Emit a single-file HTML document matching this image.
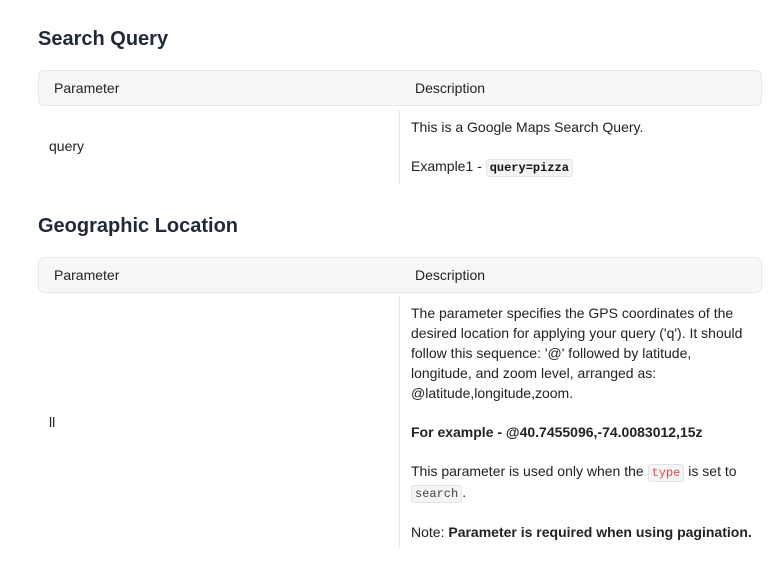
<!DOCTYPE html>
<html><head><style>
body{margin:0;background:#fff;font-family:"Liberation Sans",sans-serif;color:#1f2328;width:768px;height:566px;overflow:hidden;position:relative}
h2{position:absolute;left:38px;margin:0;font-size:20px;font-weight:bold;color:#1f2937}
.hd{position:absolute;left:38px;width:722px;height:34px;background:#f6f7f9;border:1px solid #e5e7eb;border-radius:7px;font-size:14px;color:#222}
.hd span{position:absolute;top:9px}
.t{position:absolute;font-size:14px;line-height:20px;color:#222}
.div{position:absolute;left:399px;width:1px;background:#e5e7eb}
code{font-family:"Liberation Mono",monospace;font-size:12px;line-height:14px;background:#f3f4f6;border:1px solid #e2e4e8;border-radius:3px;padding:1px 3px;display:inline-block}
p{margin:0}
</style></head><body>
<h2 style="top:28px">Search Query</h2>
<div class="hd" style="top:70px"><span style="left:15px">Parameter</span><span style="left:376px">Description</span></div>
<div class="t" style="left:49px;top:136px">query</div>
<div class="div" style="top:110px;height:74px"></div>
<div class="t" style="left:411px;top:117px"><p>This is a Google Maps Search Query.</p><p style="margin-top:19px">Example1 - <code style="font-weight:bold;color:#111">query=pizza</code></p></div>
<h2 style="top:215px">Geographic Location</h2>
<div class="hd" style="top:257px"><span style="left:15px">Parameter</span><span style="left:376px">Description</span></div>
<div class="t" style="left:49px;top:412px">ll</div>
<div class="div" style="top:296px;height:252px"></div>
<div class="t" style="left:411px;top:303px;width:340px">
<p>The parameter specifies the GPS coordinates of the desired location for applying your query ('q'). It should follow this sequence: '@' followed by latitude, longitude, and zoom level, arranged as: @latitude,longitude,zoom.</p>
<p style="margin-top:19px;font-weight:bold">For example - @40.7455096,-74.0083012,15z</p>
<p style="margin-top:19px">This parameter is used only when the <code style="color:#e5484d">type</code> is set to <code style="color:#444">search</code>.</p>
<p style="margin-top:19px;white-space:nowrap">Note: <b>Parameter is required when using pagination.</b></p>
</div>
</body></html>
